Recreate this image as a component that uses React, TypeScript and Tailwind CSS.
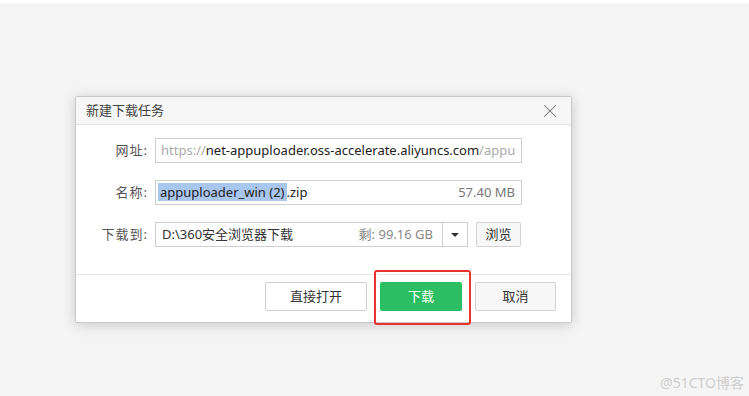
import { X } from 'lucide-react';

const font = { fontFamily: '"Noto Sans", "Noto Sans CJK SC", sans-serif' };

export default function App() {
  return (
    <div className="w-[749px] h-[396px] bg-[#f5f5f5] border-t-[3px] border-white relative overflow-hidden" style={font}>
      <div className="pt-[93px] pl-[75px]">
        {/* Dialog */}
        <div className="w-[497px] h-[227px] bg-white border border-[#c9c9c9] rounded-[2px] shadow-[0_2px_14px_rgba(0,0,0,0.18)] flex flex-col">
          {/* Title bar */}
          <div className="h-[28px] bg-[#f7f7f7] border-b border-[#e3e3e3] flex items-center justify-between pl-[10px] pr-[10px] shrink-0">
            <span className="text-[13px] text-[#444]">新建下载任务</span>
            <X className="w-[22px] h-[22px] text-[#777]" strokeWidth={1.1} />
          </div>

          {/* Body */}
          <div className="flex flex-col gap-[17px] pt-[13px] h-[150px] border-b border-[#e8e8e8] shrink-0">
            <div className="flex items-center">
              <span className="w-[73px] text-right text-[13px] text-[#555] pr-[1px] tracking-[1px]">网址:</span>
              <div className="ml-[6px] w-[367px] h-[25px] border border-[#cfcfcf] flex items-center px-[5px] text-[13px] whitespace-nowrap overflow-hidden">
                <span className="text-[#aaa]">https://</span>
                <span className="text-[#222]">net-appuploader.oss-accelerate.aliyuncs.com</span>
                <span className="text-[#aaa]">/appu</span>
              </div>
            </div>
            <div className="flex items-center">
              <span className="w-[73px] text-right text-[13px] text-[#555] pr-[1px] tracking-[1px]">名称:</span>
              <div className="ml-[6px] w-[367px] h-[25px] border border-[#cfcfcf] flex items-center justify-between pl-[2px] pr-[6px] text-[13px] whitespace-nowrap">
                <span className="text-[#222]">
                  <span className="bg-[#a9c6ef] px-[2px]">appuploader_win (2)</span>.zip
                </span>
                <span className="text-[#777]">57.40 MB</span>
              </div>
            </div>
            <div className="flex items-center">
              <span className="w-[73px] text-right text-[13px] text-[#555] pr-[1px] tracking-[1px]">下载到:</span>
              <div className="ml-[6px] w-[313px] h-[25px] border border-[#cfcfcf] flex items-center">
                <div className="flex-1 flex items-center justify-between pl-[6px] pr-[9px] text-[13px] whitespace-nowrap h-full">
                  <span className="text-[#333]">D:\360安全浏览器下载</span>
                  <span className="text-[#888]">剩: 99.16 GB</span>
                </div>
                <div className="w-[25px] h-full border-l border-[#cfcfcf] flex items-center justify-center">
                  <span className="w-0 h-0 border-l-[4px] border-r-[4px] border-t-[4px] border-l-transparent border-r-transparent border-t-[#333]" />
                </div>
              </div>
              <button className="ml-[8px] w-[45px] h-[25px] border border-[#d3d3d3] bg-[#f7f7f7] rounded-[2px] text-[13px] text-[#333]">
                浏览
              </button>
            </div>
          </div>

          {/* Footer */}
          <div className="flex items-start justify-end gap-[13px] pt-[7px] pr-[15px]">
            <button className="w-[102px] h-[29px] border border-[#cfcfcf] bg-white rounded-[2px] text-[13px] text-[#333]">
              直接打开
            </button>
            <div className="relative">
              <button className="w-[82px] h-[29px] bg-[#2cbe62] rounded-[2px] text-[13px] text-white">
                下载
              </button>
              <div className="absolute left-[-6px] top-[-12px] w-[97px] h-[55px] border-2 border-[#e8322b] rounded-[3px]" />
            </div>
            <button className="w-[81px] h-[29px] border border-[#d3d3d3] bg-[#f7f7f7] rounded-[2px] text-[13px] text-[#333]">
              取消
            </button>
          </div>
        </div>
      </div>

      <span className="absolute right-[5px] bottom-[3px] text-[14px] text-[#cfcfcf]">@51CTO博客</span>
    </div>
  );
}
